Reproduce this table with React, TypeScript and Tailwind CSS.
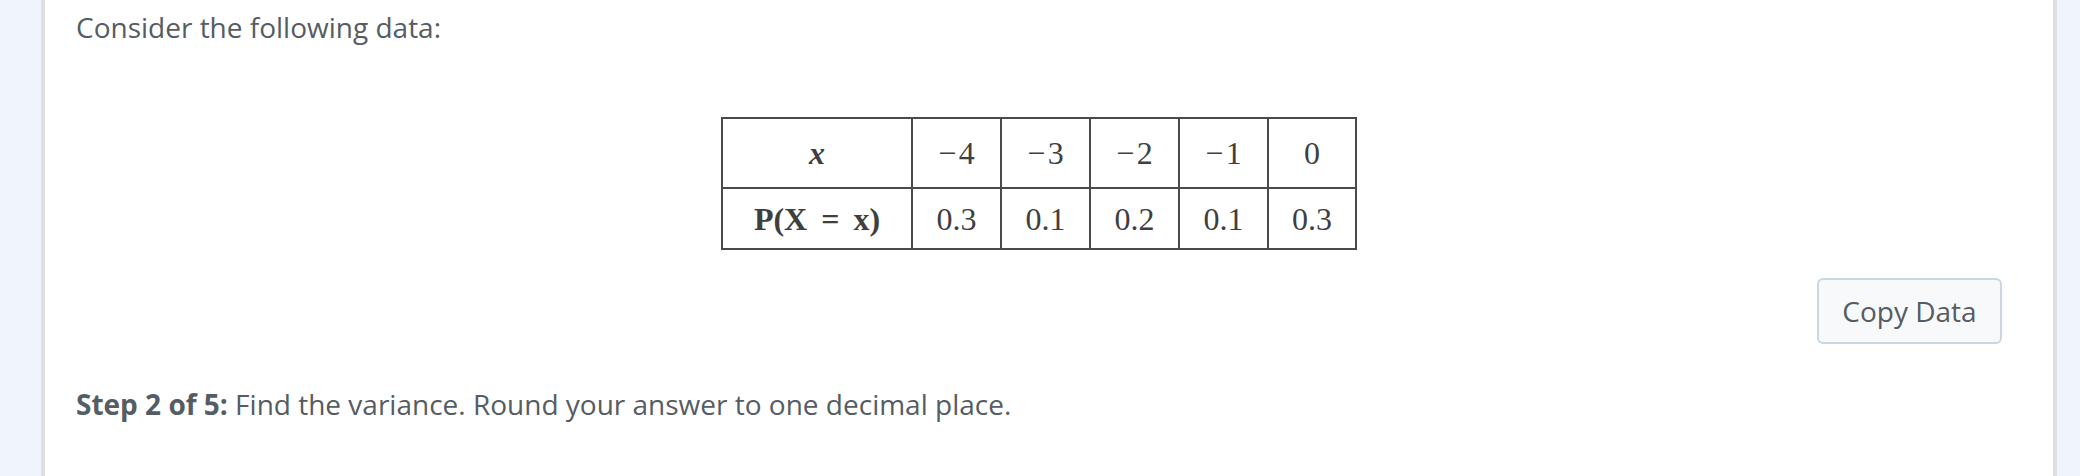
const xs = ["−\u200a4", "−\u200a3", "−\u200a2", "−\u200a1", "0"];
const ps = ["0.3", "0.1", "0.2", "0.1", "0.3"];

export default function App() {
  return (
    <div className="flex h-[476px] w-[2080px] bg-white font-['Open_Sans',sans-serif] text-[#555c63]">
      <div className="w-[41px] shrink-0 bg-[#eff4fd]" />
      <div className="w-[4px] shrink-0 bg-[#dedfe0]" />
      <main className="flex flex-1 flex-col pl-[31px] pr-[51px] pt-[8px]">
        <p className="text-[28px] leading-[38px]">Consider the following data:</p>

        <div className="mt-[71px] flex justify-center">
          <table className="table-fixed border-collapse font-['Liberation_Serif',serif] text-[32px] text-[#3f3f3f]">
            <colgroup>
              <col className="w-[190px]" />
              <col className="w-[89px]" />
              <col className="w-[89px]" />
              <col className="w-[89px]" />
              <col className="w-[89px]" />
              <col className="w-[88px]" />
            </colgroup>
            <tbody>
              <tr className="h-[70px]">
                <td className="border-2 border-[#4a4a4a] p-0 text-center font-bold italic">x</td>
                {xs.map((v, i) => (
                  <td key={i} className="border-2 border-[#4a4a4a] p-0 text-center">
                    {v}
                  </td>
                ))}
              </tr>
              <tr className="h-[61px]">
                <td className="border-2 border-[#4a4a4a] p-0 text-center font-bold whitespace-nowrap">
                  P(X<span className="mx-[14px]">=</span>x)
                </td>
                {ps.map((v, i) => (
                  <td key={i} className="border-2 border-[#4a4a4a] p-0 text-center">
                    {v}
                  </td>
                ))}
              </tr>
            </tbody>
          </table>
        </div>

        <div className="mt-[28px] flex justify-end">
          <button className="h-[66px] w-[185px] rounded-[6px] border-2 border-[#c9d7e0] bg-[#f7f9fb] text-[28px] text-[#555c63]">
            Copy Data
          </button>
        </div>

        <p className="mt-[41px] text-[28px] leading-[38px]">
          <span className="font-bold">Step 2 of 5:</span> Find the variance. Round your answer to one decimal place.
        </p>
      </main>
      <div className="w-[4px] shrink-0 bg-[#dedfe0]" />
      <div className="w-[23px] shrink-0 bg-[#eff4fd]" />
    </div>
  );
}
